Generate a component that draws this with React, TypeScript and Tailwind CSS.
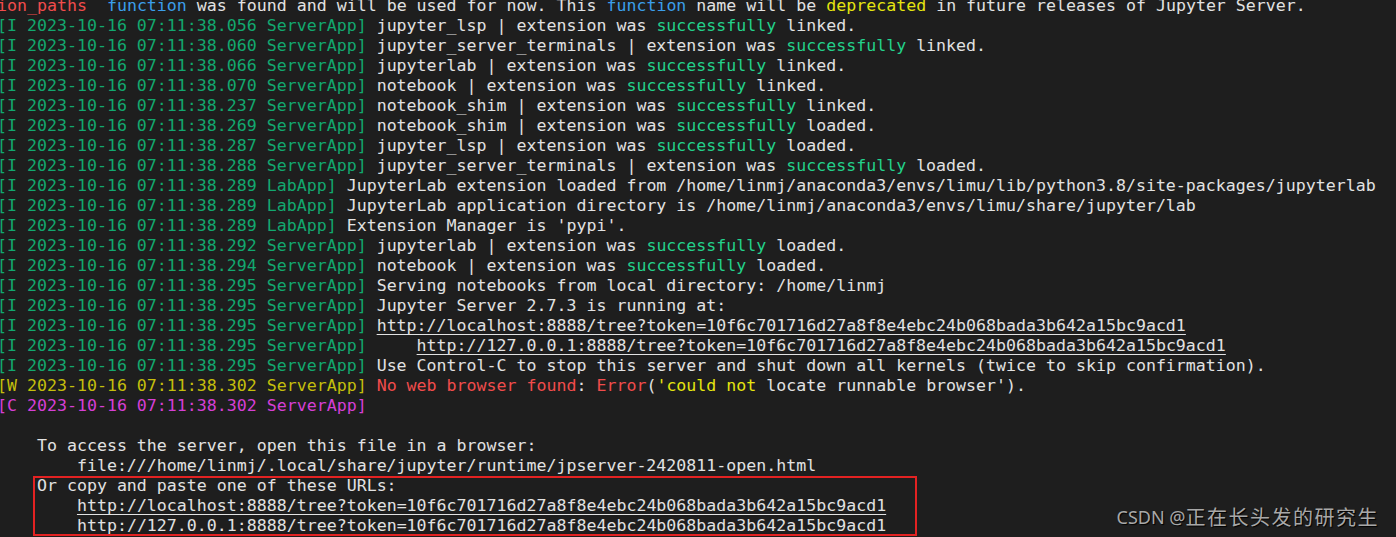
import React from 'react';

type Seg = { t: string; c?: string; u?: boolean };

// terminal palette
const WHITE = 'text-[#e2e2e2]';
const GREEN = 'text-[#12a86f]';
const OK = 'text-[#23d18b]';
const RED = 'text-[#f14c4c]';
const BLUE = 'text-[#3b9eea]';
const YELLOW = 'text-[#e5e510]';
const OLIVE = 'text-[#c4bf0c]';
const MAGENTA = 'text-[#d63fd6]';

const TOKEN = '10f6c701716d27a8f8e4ebc24b068bada3b642a15bc9acd1';

const info = (ms: string, app = 'ServerApp'): Seg => ({
  t: `[I 2023-10-16 07:11:38.${ms} ${app}] `,
  c: GREEN,
});

const ext = (ms: string, name: string, verb: string): Seg[] => [
  info(ms),
  { t: `${name} | extension was ` },
  { t: 'successfully', c: OK },
  { t: ` ${verb}.` },
];

const lines: Seg[][] = [
  [
    { t: 'ion_paths', c: RED },
    { t: '  ' },
    { t: 'function', c: BLUE },
    { t: ' was found and will be used for now. This ' },
    { t: 'function', c: BLUE },
    { t: ' name will be ' },
    { t: 'deprecated', c: YELLOW },
    { t: ' in future releases of Jupyter Server.' },
  ],
  ext('056', 'jupyter_lsp', 'linked'),
  ext('060', 'jupyter_server_terminals', 'linked'),
  ext('066', 'jupyterlab', 'linked'),
  ext('070', 'notebook', 'linked'),
  ext('237', 'notebook_shim', 'linked'),
  ext('269', 'notebook_shim', 'loaded'),
  ext('287', 'jupyter_lsp', 'loaded'),
  ext('288', 'jupyter_server_terminals', 'loaded'),
  [
    info('289', 'LabApp'),
    { t: 'JupyterLab extension loaded from /home/linmj/anaconda3/envs/limu/lib/python3.8/site-packages/jupyterlab' },
  ],
  [
    info('289', 'LabApp'),
    { t: 'JupyterLab application directory is /home/linmj/anaconda3/envs/limu/share/jupyter/lab' },
  ],
  [info('289', 'LabApp'), { t: "Extension Manager is 'pypi'." }],
  ext('292', 'jupyterlab', 'loaded'),
  ext('294', 'notebook', 'loaded'),
  [info('295'), { t: 'Serving notebooks from local directory: /home/linmj' }],
  [info('295'), { t: 'Jupyter Server 2.7.3 is running at:' }],
  [info('295'), { t: `http://localhost:8888/tree?token=${TOKEN}`, u: true }],
  [info('295'), { t: '    ' }, { t: `http://127.0.0.1:8888/tree?token=${TOKEN}`, u: true }],
  [info('295'), { t: 'Use Control-C to stop this server and shut down all kernels (twice to skip confirmation).' }],
  [
    { t: '[W 2023-10-16 07:11:38.302 ServerApp] ', c: OLIVE },
    { t: 'No web browser found', c: RED },
    { t: ': ' },
    { t: 'Error', c: RED },
    { t: '(' },
    { t: "'could not", c: YELLOW },
    { t: " locate runnable browser')." },
  ],
  [{ t: '[C 2023-10-16 07:11:38.302 ServerApp]', c: MAGENTA }],
  [{ t: ' ' }],
  [{ t: '    To access the server, open this file in a browser:' }],
  [{ t: '        file:///home/linmj/.local/share/jupyter/runtime/jpserver-2420811-open.html' }],
];

const boxed: Seg[][] = [
  [{ t: '    Or copy and paste one of these URLs:' }],
  [{ t: '        ' }, { t: `http://localhost:8888/tree?token=${TOKEN}`, u: true }],
  [{ t: '        ' }, { t: `http://127.0.0.1:8888/tree?token=${TOKEN}`, u: true }],
];

const Line = ({ segs }: { segs: Seg[] }) => (
  <div className="h-[20px]">
    {segs.map((s, i) => (
      <span
        key={i}
        className={`${s.c ?? WHITE} ${s.u ? 'underline underline-offset-[3px] decoration-1' : ''}`}
      >
        {s.t}
      </span>
    ))}
  </div>
);

export default function App() {
  return (
    <div className="relative w-[1396px] h-[537px] overflow-hidden bg-[#1e1e1e]">
      <div className="-mt-[4px] -ml-[3px] whitespace-pre font-['DejaVu_Sans_Mono',monospace] text-[16.6px] leading-[20px]">
        {lines.map((segs, i) => (
          <Line key={i} segs={segs} />
        ))}
        <div className="relative">
          {boxed.map((segs, i) => (
            <Line key={i} segs={segs} />
          ))}
          {/* annotation box drawn over the last three rows */}
          <div className="absolute left-[36px] top-0 w-[884px] h-[60px] border-2 border-[#e32222]" />
        </div>
      </div>

      {/* watermark */}
      <div className="absolute right-[17px] bottom-[10px] flex items-center leading-none text-[#a8a8a8] [text-shadow:1px_1px_1px_#000]">
        <span className="text-[18px] font-['Noto_Sans',sans-serif]">CSDN @</span>
        <span className="text-[20px] tracking-[1.5px] font-['Noto_Sans_CJK_SC',sans-serif]">正在长头发的研究生</span>
      </div>
    </div>
  );
}
